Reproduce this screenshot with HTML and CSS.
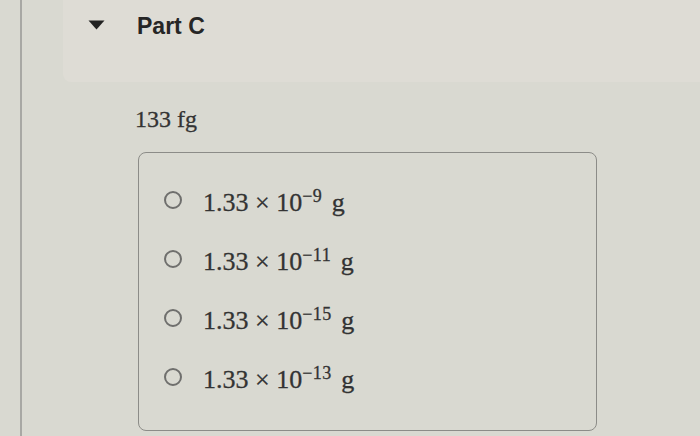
FILE: index.html
```html
<!DOCTYPE html>
<html>
<head>
<meta charset="utf-8">
<link rel="stylesheet" href="styles.css">
</head>
<body>
<div class="page">
  <div class="rail"></div>
  <div class="content">
    <div class="header">
      <svg class="caret" width="17" height="10" viewBox="0 0 17 10"><path d="M0.5 0.5 H16.5 L8.5 9.5 Z" fill="#222"/></svg>
      <span class="title">Part C</span>
    </div>
    <div class="question">133 fg</div>
    <div class="choices">
      <div class="choice"><span class="radio"></span><span class="math">1.33 × 10<sup>−9</sup> g</span></div>
      <div class="choice"><span class="radio"></span><span class="math">1.33 × 10<sup>−11</sup> g</span></div>
      <div class="choice"><span class="radio"></span><span class="math">1.33 × 10<sup>−15</sup> g</span></div>
      <div class="choice"><span class="radio"></span><span class="math">1.33 × 10<sup>−13</sup> g</span></div>
    </div>
  </div>
</div>
</body>
</html>
```
FILE: styles.css
```css
html, body {
  margin: 0;
  padding: 0;
  background: #d9d9d1;
}
.page {
  display: flex;
  width: 700px;
  height: 436px;
  overflow: hidden;
}
.rail {
  width: 20px;
  flex: none;
  border-right: 2px solid #a8a8a4;
}
.content {
  flex: 1;
  padding-left: 41px;
}
.header {
  height: 82px;
  box-sizing: border-box;
  background: #dedcd5;
  border-bottom-left-radius: 8px;
  padding: 12px 0 0 25px;
  display: flex;
  align-items: flex-start;
}
.caret {
  margin-top: 8px;
  flex: none;
}
.title {
  margin-left: 32px;
  font-family: "Liberation Sans", Arial, sans-serif;
  font-weight: bold;
  font-size: 23px;
  line-height: 28px;
  color: #262626;
}
.question {
  margin: 23px 0 0 72px;
  font-family: "Liberation Serif", "Times New Roman", serif;
  font-size: 24px;
  line-height: 28px;
  color: #333;
  -webkit-text-stroke: 0.3px #333;
}
.choices {
  margin: 19px 0 0 75px;
  width: 459px;
  height: 279px;
  box-sizing: border-box;
  border: 1.5px solid #8c8c88;
  border-radius: 8px;
  padding: 20px 0 19px 25px;
}
.choice {
  height: 59px;
  display: flex;
  align-items: center;
}
.radio {
  width: 14px;
  height: 14px;
  border: 2px solid #6f6f6d;
  border-radius: 50%;
  flex: none;
  margin-top: -5px;
}
.math {
  margin-left: 21px;
  font-family: "Liberation Serif", "Times New Roman", serif;
  font-size: 26px;
  line-height: 30px;
  color: #333;
  white-space: pre;
  -webkit-text-stroke: 0.3px #333;
}
.math sup {
  font-size: 18px;
  line-height: 0;
  vertical-align: 9px;
  letter-spacing: 0.5px;
  padding-right: 3px;
}
```
